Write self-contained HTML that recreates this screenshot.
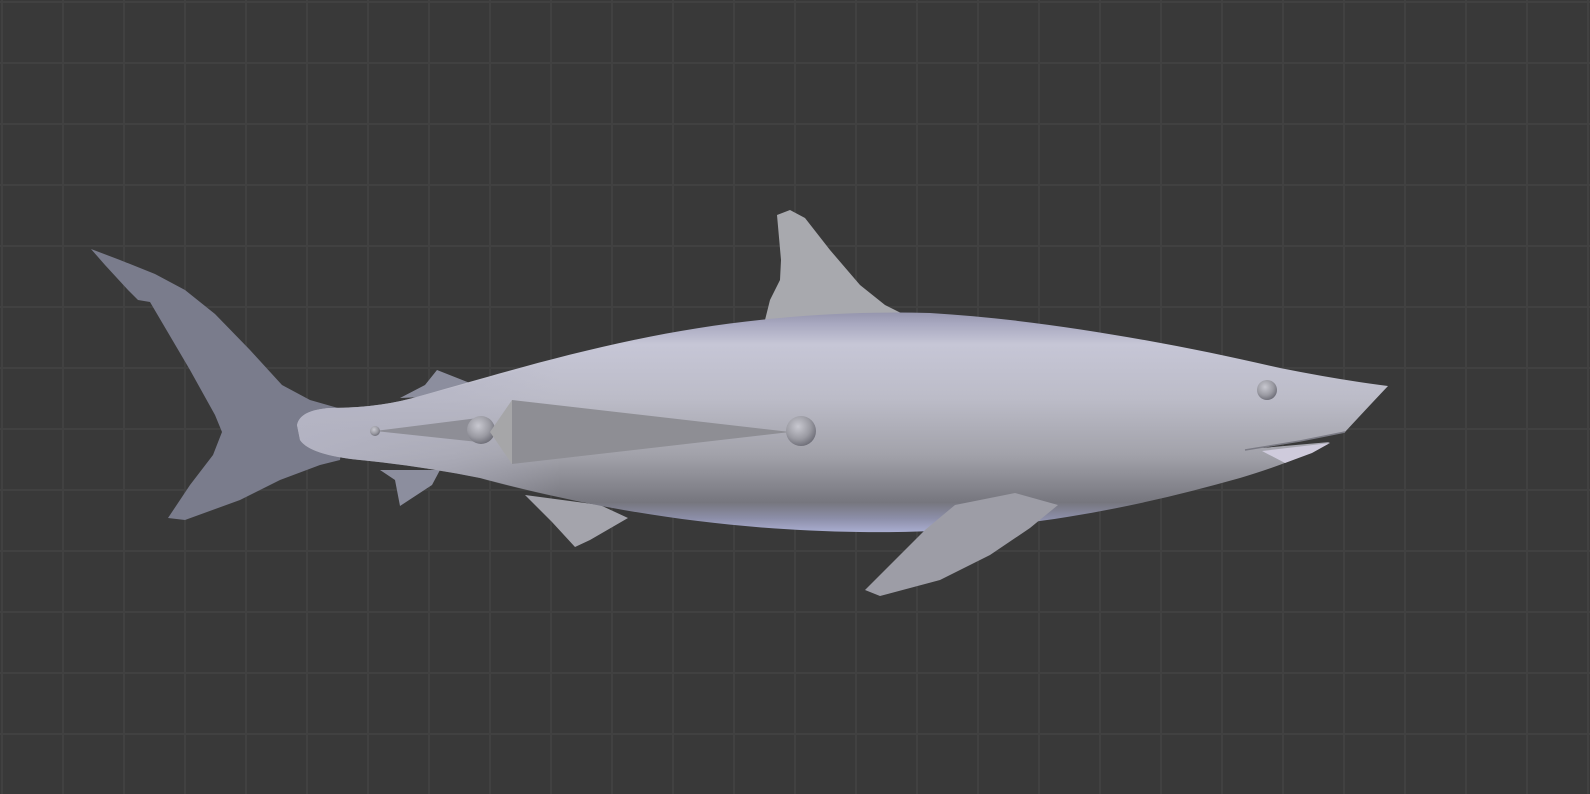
<!DOCTYPE html>
<html><head><meta charset="utf-8"><style>
html,body{margin:0;padding:0;background:#393939;overflow:hidden}
svg{display:block}
</style></head><body>
<svg width="1590" height="794" viewBox="0 0 1590 794" xmlns="http://www.w3.org/2000/svg">
<defs>
<pattern id="grid" x="1" y="1" width="61" height="61" patternUnits="userSpaceOnUse">
<rect width="61" height="61" fill="#393939"/>
<rect width="61" height="2" fill="#414141"/>
<rect width="2" height="61" fill="#414141"/>
</pattern>
<linearGradient id="bodyG" gradientUnits="userSpaceOnUse" x1="0" y1="308" x2="0" y2="534">
<stop offset="0" stop-color="#8e8ea6"/>
<stop offset="0.07" stop-color="#a8a8c0"/>
<stop offset="0.16" stop-color="#c6c6d6"/>
<stop offset="0.4" stop-color="#bcbcc8"/>
<stop offset="0.65" stop-color="#a2a2aa"/>
<stop offset="0.86" stop-color="#76767e"/>
<stop offset="0.93" stop-color="#8c8ea8"/>
<stop offset="1" stop-color="#aeb2d6"/>
</linearGradient>
<linearGradient id="fadeX" gradientUnits="userSpaceOnUse" x1="295" y1="0" x2="560" y2="0">
<stop offset="0" stop-color="#b4b4c4" stop-opacity="0.9"/>
<stop offset="0.6" stop-color="#b4b4c4" stop-opacity="0.5"/>
<stop offset="1" stop-color="#b4b4c4" stop-opacity="0"/>
</linearGradient>
<radialGradient id="sph" cx="0.4" cy="0.35" r="0.7">
<stop offset="0" stop-color="#c8c8d0"/>
<stop offset="0.6" stop-color="#9a9aa2"/>
<stop offset="1" stop-color="#6a6a74"/>
</radialGradient>
</defs>
<rect width="1590" height="794" fill="url(#grid)"/>
<!-- tail fin -->
<path d="M91,249 L120,260 L155,274 L185,290 L215,314 L250,350 L282,385 L310,400 L345,410 L340,460 L320,465 L280,480 L240,500 L185,520 L168,518 L190,485 L213,455 L222,432 L215,415 L190,370 L150,302 L138,300 L128,290 L105,265 Z" fill="#7a7c8c"/>
<!-- small fins near tail -->
<path d="M400,398 L425,385 L437,370 L475,385 L470,395 Z" fill="#8c8e9e"/>
<path d="M380,470 L395,480 L400,506 L432,485 L440,470 Z" fill="#8c8e9e"/>
<!-- dorsal fin -->
<path d="M765,320 L770,300 L780,280 L781,260 L777,215 L790,210 L805,218 L830,250 L860,285 L885,305 L905,315 L840,330 Z" fill="#a8a9ae"/>
<!-- pelvic fin -->
<path d="M525,495 L552,522 L575,547 L590,540 L628,518 L600,505 Z" fill="#a4a4ac"/>
<!-- body -->
<path d="M297,425 Q300,410 330,408 Q380,408 420,396 C520,368 640,330 780,318 Q850,311 930,313 C1050,320 1180,345 1280,368 Q1340,380 1388,386 Q1370,405 1345,432 L1262,448 L1330,442 Q1300,460 1240,478 C1120,512 1000,534 860,532 C720,530 600,510 480,478 Q420,466 360,460 Q310,455 300,440 Z" fill="url(#bodyG)"/>
<path d="M297,425 Q300,410 330,408 Q380,408 420,396 L560,360 L560,498 Q500,484 480,478 Q420,466 360,460 Q310,455 300,440 Z" fill="url(#fadeX)"/>
<!-- mouth line -->
<path d="M1245,450 L1300,441 L1345,432" stroke="#7a7a84" stroke-width="1.5" fill="none"/>
<path d="M1262,451 L1330,443 L1312,453 L1285,463 Z" fill="#cfcbdc"/>
<!-- pectoral fin -->
<path d="M955,505 L1015,493 L1058,505 L1030,528 L990,555 L940,580 L880,596 L865,590 L890,565 L925,530 Z" fill="#9d9da6"/>
<!-- bones -->
<path d="M375,431 L478,418 L478,442 Z" fill="#8e8e96"/>
<circle cx="375" cy="431" r="5" fill="url(#sph)"/>
<circle cx="481" cy="430" r="14" fill="url(#sph)"/>
<path d="M490,432 L512,400 L512,464 Z" fill="#a6a6a8"/>
<path d="M512,400 L790,432 L512,464 Z" fill="#8e8e94"/>
<circle cx="801" cy="431" r="15" fill="url(#sph)"/>
<!-- eye -->
<circle cx="1267" cy="390" r="10" fill="url(#sph)"/>
</svg>
</body></html>
